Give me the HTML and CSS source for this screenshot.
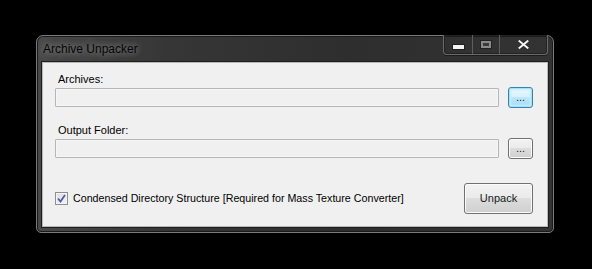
FILE: index.html
```html
<!DOCTYPE html>
<html>
<head>
<meta charset="utf-8">
<title>Archive Unpacker</title>
<link rel="stylesheet" href="styles.css">
</head>
<body>
<div class="window">
  <div class="titlebar">
    <span class="title">Archive Unpacker</span>
    <div class="caption-buttons">
      <div class="cbtn cbtn-min"><span class="min-icon"></span></div>
      <div class="cbtn cbtn-max"><span class="max-icon"></span></div>
      <div class="cbtn cbtn-close">
        <svg width="11" height="9" viewBox="0 0 11 9"><path d="M1.5 1.2 L9.5 7.8 M9.5 1.2 L1.5 7.8" stroke="#2a2a2a" stroke-width="3.6" stroke-linecap="square"/><path d="M1.5 1.2 L9.5 7.8 M9.5 1.2 L1.5 7.8" stroke="#f4f4f4" stroke-width="2" stroke-linecap="square"/></svg>
      </div>
    </div>
  </div>
  <div class="client">
    <div class="label label-archives">Archives:</div>
    <div class="row">
      <div class="textbox"></div>
      <div class="btn btn-small btn-focus">...</div>
    </div>
    <div class="label label-output">Output Folder:</div>
    <div class="row">
      <div class="textbox"></div>
      <div class="btn btn-small">...</div>
    </div>
    <div class="bottom-row">
      <label class="check">
        <span class="checkbox">
          <svg width="9" height="9" viewBox="0 0 9 9"><path d="M1 4.5 L3.5 7.5 L8 1" fill="none" stroke="#4a5fa8" stroke-width="1.8"/></svg>
        </span>
        <span class="check-text">Condensed Directory Structure [Required for Mass Texture Converter]</span>
      </label>
      <div class="btn btn-unpack">Unpack</div>
    </div>
  </div>
</div>
</body>
</html>
```

FILE: styles.css
```css
html, body {
  margin: 0;
  padding: 0;
  background: #000;
}
body {
  width: 592px;
  height: 269px;
  padding: 35px 0 0 36px;
  box-sizing: border-box;
  font-family: "Liberation Sans", Arial, sans-serif;
}
.window {
  width: 518px;
  height: 198px;
  box-sizing: border-box;
  border: 1px solid #7a7a7a;
  border-radius: 7px 7px 5px 5px;
  background: linear-gradient(90deg, #4a4a4a 0%, #363636 25%, #2e2e2e 60%, #333 100%);
  box-shadow: inset 0 0 0 1px #1a1a1a;
  display: flex;
  flex-direction: column;
}
.titlebar {
  height: 26px;
  display: flex;
  align-items: flex-start;
  justify-content: space-between;
  padding-left: 6px;
  padding-right: 5px;
}
.title {
  margin-top: 6px;
  font-size: 12px;
  color: #050505;
  text-shadow: 0 0 6px rgba(200,200,200,0.55), 0 0 10px rgba(200,200,200,0.35);
  padding: 0 4px 0 0;
}
.caption-buttons {
  display: flex;
  height: 19px;
  margin-top: -1px;
  border: 1px solid #6a6a6a;
  border-top: none;
  border-radius: 0 0 4px 4px;
  box-shadow: 0 1px 0 #1c1c1c, inset 0 0 0 1px #222;
  overflow: hidden;
}
.cbtn {
  display: flex;
  align-items: center;
  justify-content: center;
  height: 19px;
}
.cbtn-min { width: 28px; border-right: 1px solid #5e5e5e; }
.cbtn-max { width: 26px; border-right: 1px solid #5e5e5e; }
.cbtn-close { width: 47px; }
.min-icon {
  display: block;
  width: 11px;
  height: 4px;
  margin-top: 4px;
  background: #f2f2f2;
  border: 1px solid #1e1e1e;
}
.max-icon {
  display: block;
  width: 6px;
  height: 3px;
  background: #3a3a3a;
  border: 2px solid #8a8a8a;
  outline: 1px solid #222;
}
.cbtn-close svg { display: block; }

.client {
  margin: 0 5px 5px 5px;
  flex: 1;
  background: #f0f0f0;
  border: 1px solid #b8b8b8;
  box-shadow: 0 0 0 1px #1e1e1e;
  padding: 0 14px 0 12px;
  display: flex;
  flex-direction: column;
  font-size: 11px;
  color: #000;
}
.label {
  padding-left: 3px;
  line-height: 13px;
}
.label-archives { margin-top: 10px; }
.label-output { margin-top: 16px; }
.row {
  display: flex;
  align-items: center;
  margin-top: 1px;
  height: 21px;
}
.textbox {
  width: 444px;
  height: 19px;
  box-sizing: border-box;
  border: 1px solid #b6b6b6;
  border-radius: 1px;
  background: #f0f0f0;
  box-shadow: inset 0 0 0 1px #f6f6f6;
}
.btn {
  box-sizing: border-box;
  border: 1px solid #707070;
  border-radius: 3px;
  background: linear-gradient(#f2f2f2 0%, #ebebeb 48%, #dddddd 50%, #cfcfcf 100%);
  box-shadow: inset 0 0 0 1px #fbfbfb;
  display: flex;
  align-items: center;
  justify-content: center;
  color: #1a1a1a;
}
.btn-small {
  width: 25px;
  height: 21px;
  margin-left: 9px;
  font-size: 11px;
  padding-bottom: 2px;
}
.btn-focus {
  border-color: #3c7fb1;
  background: linear-gradient(#eaf6fd 0%, #d9f0fc 48%, #bee6fd 50%, #a7d9f5 100%);
  box-shadow: inset 0 0 0 1px #9ee3f9, inset 0 0 2px 2px #c7eefc;
}
.bottom-row {
  margin-top: 24px;
  display: flex;
  align-items: center;
  justify-content: space-between;
}
.check {
  display: flex;
  align-items: center;
  margin-top: -1px;
}
.checkbox {
  width: 13px;
  height: 13px;
  box-sizing: border-box;
  border: 1px solid #8f8f8f;
  background: linear-gradient(135deg, #dcdcdc, #f6f6f6);
  box-shadow: inset 0 0 0 1px #f4f4f4;
  display: flex;
  align-items: center;
  justify-content: center;
}
.checkbox svg { display: block; }
.check-text {
  margin-left: 5px;
  font-size: 10.7px;
}
.btn-unpack {
  width: 69px;
  height: 31px;
  font-size: 11px;
  padding-bottom: 1px;
}
```
